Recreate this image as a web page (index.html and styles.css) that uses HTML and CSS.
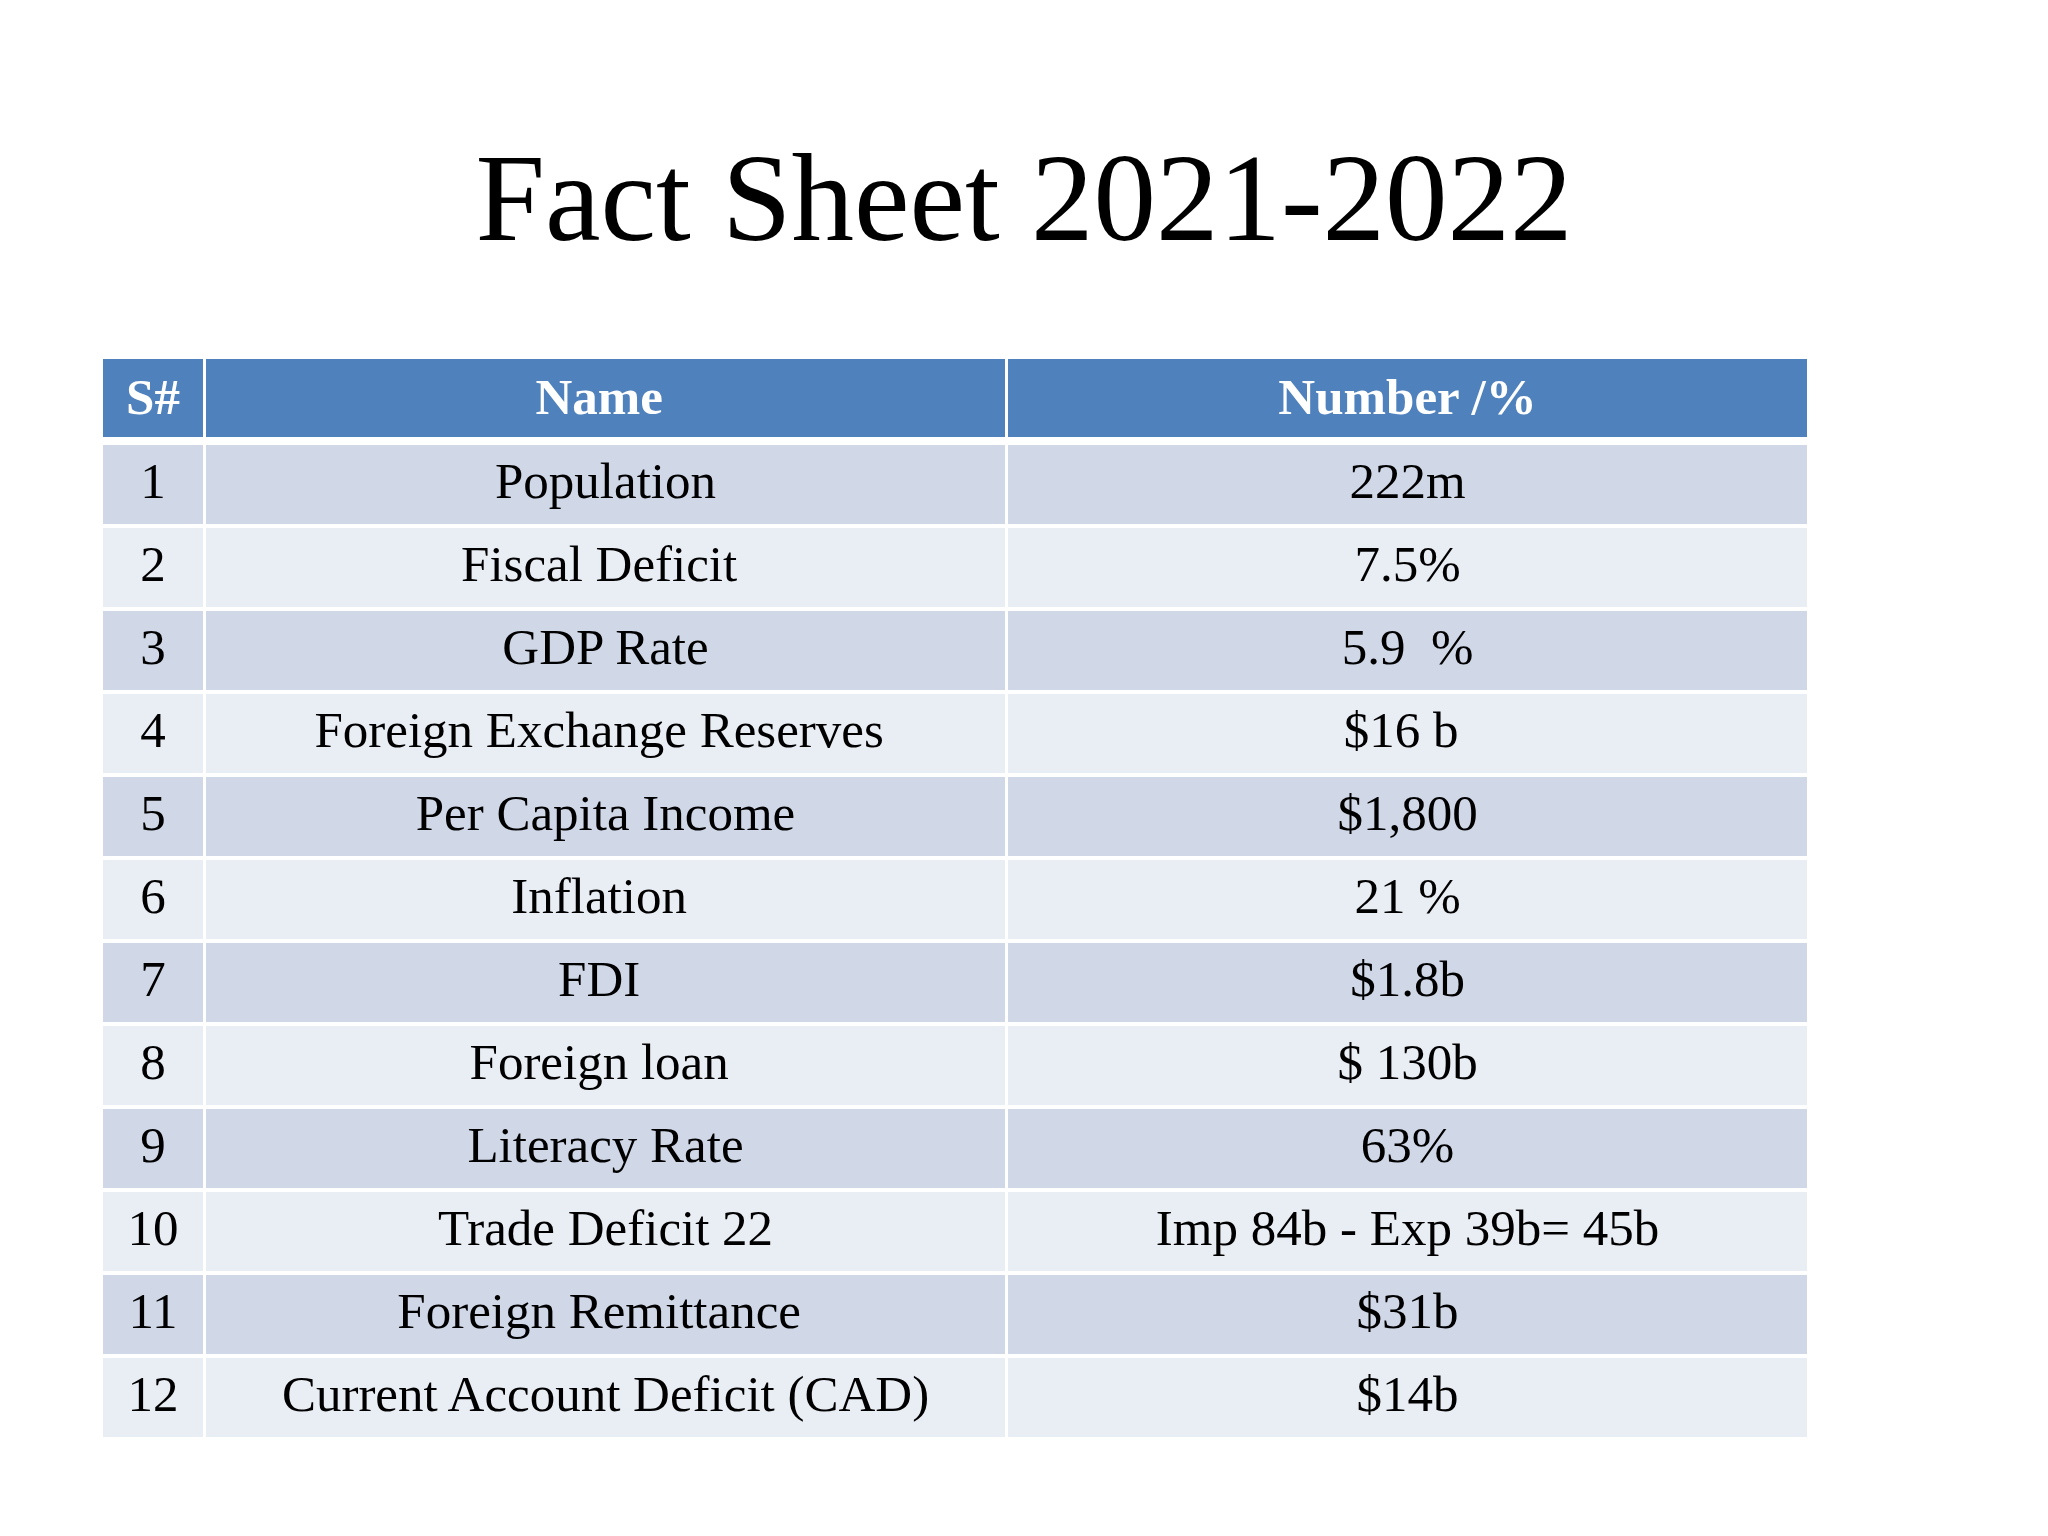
FILE: index.html
```html
<!DOCTYPE html>
<html lang="en">
<head>
<meta charset="utf-8">
<title>Fact Sheet 2021-2022</title>
<link rel="stylesheet" href="styles.css">
</head>
<body>
<div class="slide">
  <h1 class="title">Fact Sheet 2021-2022</h1>
  <table class="facts">
    <colgroup>
      <col class="c-num">
      <col class="c-name">
      <col class="c-val">
    </colgroup>
    <thead>
      <tr><th>S#</th><th>Name&nbsp;</th><th>Number /%</th></tr>
    </thead>
    <tbody>
      <tr><td>1</td><td>Population</td><td>222m</td></tr>
      <tr><td>2</td><td>Fiscal Deficit&nbsp;</td><td>7.5%</td></tr>
      <tr><td>3</td><td>GDP Rate</td><td>5.9 &nbsp;%</td></tr>
      <tr><td>4</td><td>Foreign Exchange Reserves&nbsp;</td><td>$16 b&nbsp;</td></tr>
      <tr><td>5</td><td>Per Capita Income</td><td>$1,800</td></tr>
      <tr><td>6</td><td>Inflation&nbsp;</td><td>21 %</td></tr>
      <tr><td>7</td><td>FDI&nbsp;</td><td>$1.8b</td></tr>
      <tr><td>8</td><td>Foreign loan&nbsp;</td><td>$ 130b</td></tr>
      <tr><td>9</td><td>Literacy Rate</td><td>63%</td></tr>
      <tr><td>10</td><td>Trade Deficit 22</td><td>Imp 84b - Exp 39b= 45b</td></tr>
      <tr><td>11</td><td>Foreign Remittance&nbsp;</td><td>$31b</td></tr>
      <tr><td>12</td><td>Current Account Deficit (CAD)</td><td>$14b</td></tr>
    </tbody>
  </table>
</div>
</body>
</html>
```

FILE: styles.css
```css
html, body {
  margin: 0;
  padding: 0;
  background: #ffffff;
}

.slide {
  width: 2048px;
  height: 1536px;
  font-family: "Liberation Serif", "Times New Roman", serif;
  color: #000000;
}

.title {
  margin: 0;
  padding-top: 127px;
  font-size: 125px;
  font-weight: normal;
  line-height: normal;
  text-align: center;
  letter-spacing: 0;
}

.facts {
  margin: 89px 0 0 103px;
  width: 1704px;
  table-layout: fixed;
  border-collapse: separate;
  border-spacing: 0;
  font-size: 51px;
}

.c-num { width: 103px; }
.c-name { width: 802px; }
.c-val { width: 799px; }

.facts th,
.facts td {
  box-sizing: border-box;
  padding: 0 0 3px 0;
  text-align: center;
  vertical-align: middle;
  line-height: normal;
  white-space: nowrap;
  border-right: 3px solid #ffffff;
}

.facts th:last-child,
.facts td:last-child {
  border-right: 0;
}

.facts th {
  height: 86px;
  background: #4f81bd;
  color: #ffffff;
  font-weight: bold;
  border-bottom: 8px solid #ffffff;
}

.facts td {
  height: 83px;
  padding-bottom: 7px;
  border-bottom: 4px solid #ffffff;
}

.facts tbody tr:nth-child(odd) td {
  background: #d0d8e8;
}

.facts tbody tr:nth-child(even) td {
  background: #e9edf4;
}
```
